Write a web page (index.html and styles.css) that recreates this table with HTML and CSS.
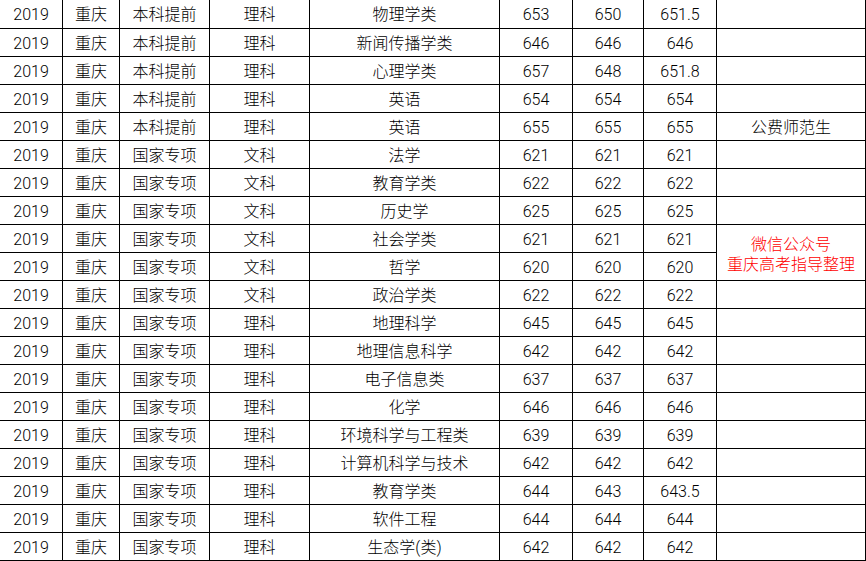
FILE: index.html
```html
<!DOCTYPE html>
<html lang="zh-CN">
<head>
<meta charset="utf-8">
<title>录取分数</title>
<link rel="stylesheet" href="styles.css">
</head>
<body>
<div class="sheet">
  <div class="c">2019</div><div class="c">重庆</div><div class="c">本科提前</div><div class="c">理科</div><div class="c">物理学类</div><div class="c">653</div><div class="c">650</div><div class="c">651.5</div><div class="c"></div>
  <div class="c">2019</div><div class="c">重庆</div><div class="c">本科提前</div><div class="c">理科</div><div class="c">新闻传播学类</div><div class="c">646</div><div class="c">646</div><div class="c">646</div><div class="c"></div>
  <div class="c">2019</div><div class="c">重庆</div><div class="c">本科提前</div><div class="c">理科</div><div class="c">心理学类</div><div class="c">657</div><div class="c">648</div><div class="c">651.8</div><div class="c"></div>
  <div class="c">2019</div><div class="c">重庆</div><div class="c">本科提前</div><div class="c">理科</div><div class="c">英语</div><div class="c">654</div><div class="c">654</div><div class="c">654</div><div class="c"></div>
  <div class="c">2019</div><div class="c">重庆</div><div class="c">本科提前</div><div class="c">理科</div><div class="c">英语</div><div class="c">655</div><div class="c">655</div><div class="c">655</div><div class="c">公费师范生</div>
  <div class="c">2019</div><div class="c">重庆</div><div class="c">国家专项</div><div class="c">文科</div><div class="c">法学</div><div class="c">621</div><div class="c">621</div><div class="c">621</div><div class="c"></div>
  <div class="c">2019</div><div class="c">重庆</div><div class="c">国家专项</div><div class="c">文科</div><div class="c">教育学类</div><div class="c">622</div><div class="c">622</div><div class="c">622</div><div class="c"></div>
  <div class="c">2019</div><div class="c">重庆</div><div class="c">国家专项</div><div class="c">文科</div><div class="c">历史学</div><div class="c">625</div><div class="c">625</div><div class="c">625</div><div class="c"></div>
  <div class="c">2019</div><div class="c">重庆</div><div class="c">国家专项</div><div class="c">文科</div><div class="c">社会学类</div><div class="c">621</div><div class="c">621</div><div class="c">621</div><div class="c note">微信公众号<br>重庆高考指导整理</div>
  <div class="c">2019</div><div class="c">重庆</div><div class="c">国家专项</div><div class="c">文科</div><div class="c">哲学</div><div class="c">620</div><div class="c">620</div><div class="c">620</div>
  <div class="c">2019</div><div class="c">重庆</div><div class="c">国家专项</div><div class="c">文科</div><div class="c">政治学类</div><div class="c">622</div><div class="c">622</div><div class="c">622</div><div class="c"></div>
  <div class="c">2019</div><div class="c">重庆</div><div class="c">国家专项</div><div class="c">理科</div><div class="c">地理科学</div><div class="c">645</div><div class="c">645</div><div class="c">645</div><div class="c"></div>
  <div class="c">2019</div><div class="c">重庆</div><div class="c">国家专项</div><div class="c">理科</div><div class="c">地理信息科学</div><div class="c">642</div><div class="c">642</div><div class="c">642</div><div class="c"></div>
  <div class="c">2019</div><div class="c">重庆</div><div class="c">国家专项</div><div class="c">理科</div><div class="c">电子信息类</div><div class="c">637</div><div class="c">637</div><div class="c">637</div><div class="c"></div>
  <div class="c">2019</div><div class="c">重庆</div><div class="c">国家专项</div><div class="c">理科</div><div class="c">化学</div><div class="c">646</div><div class="c">646</div><div class="c">646</div><div class="c"></div>
  <div class="c">2019</div><div class="c">重庆</div><div class="c">国家专项</div><div class="c">理科</div><div class="c">环境科学与工程类</div><div class="c">639</div><div class="c">639</div><div class="c">639</div><div class="c"></div>
  <div class="c">2019</div><div class="c">重庆</div><div class="c">国家专项</div><div class="c">理科</div><div class="c">计算机科学与技术</div><div class="c">642</div><div class="c">642</div><div class="c">642</div><div class="c"></div>
  <div class="c">2019</div><div class="c">重庆</div><div class="c">国家专项</div><div class="c">理科</div><div class="c">教育学类</div><div class="c">644</div><div class="c">643</div><div class="c">643.5</div><div class="c"></div>
  <div class="c">2019</div><div class="c">重庆</div><div class="c">国家专项</div><div class="c">理科</div><div class="c">软件工程</div><div class="c">644</div><div class="c">644</div><div class="c">644</div><div class="c"></div>
  <div class="c">2019</div><div class="c">重庆</div><div class="c">国家专项</div><div class="c">理科</div><div class="c">生态学(类)</div><div class="c">642</div><div class="c">642</div><div class="c">642</div><div class="c"></div>
</div>
</body>
</html>
```
FILE: styles.css
```css
html, body {
  margin: 0;
  padding: 0;
  background: #fff;
  overflow: hidden;
}
.sheet {
  display: grid;
  grid-template-columns: 63px 57px 90px 100px 190px 73px 71px 73px 149px;
  grid-template-rows: 29px repeat(19, 28px);
  width: 866px;
  font-family: Roboto, "Noto Sans CJK SC", sans-serif;
  font-size: 16px;
  font-weight: 300;
  color: #000;
}
.c {
  box-sizing: border-box;
  border-right: 1px solid #000;
  border-bottom: 1px solid #000;
  display: flex;
  align-items: center;
  justify-content: center;
  text-align: center;
  line-height: 20px;
  padding-top: 2px;
  white-space: nowrap;
}
.note {
  grid-row: span 2;
  color: #f00;
  padding-top: 4px;
}
```
